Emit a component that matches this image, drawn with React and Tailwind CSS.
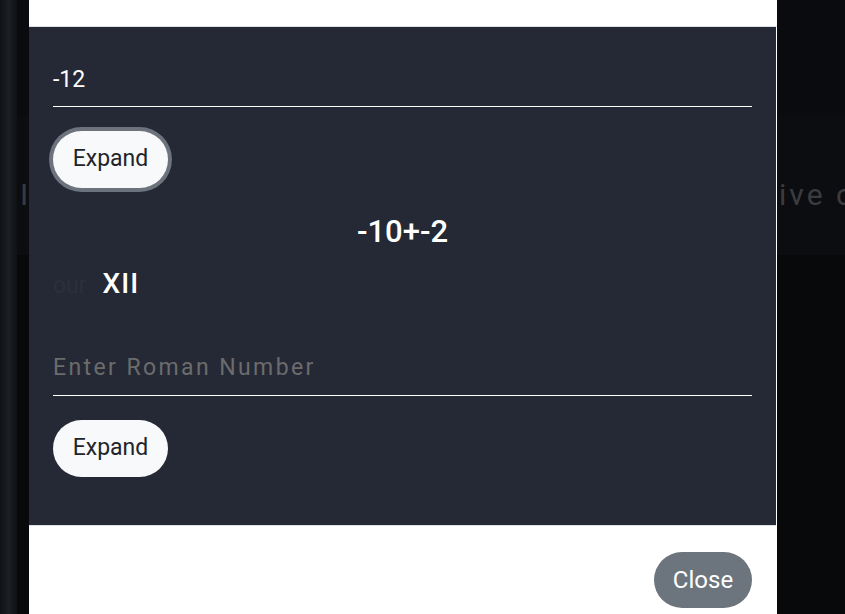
import React from "react";

export default function App() {
  return (
    <div className="relative w-[845px] h-[614px] overflow-hidden flex bg-[#08090b] font-['Roboto','Open_Sans',sans-serif]">
      {/* backdrop page */}
      <div className="w-[17px] h-full bg-gradient-to-r from-[#101216] via-[#1c1f24] to-[#0f1114]" />
      <div className="flex-1 flex flex-col">
        <div className="h-[115px] bg-[#0a0b0e]" />
        <div className="h-[140px] bg-[#0c0d10] flex items-center pt-[18px] pl-[3px] text-[30px] tracking-[3px] text-[#3b3c40] whitespace-nowrap">
          <span>I</span>
          <span className="ml-auto w-[67px] overflow-hidden pl-[1px]">ive c</span>
        </div>
        <div className="flex-1 bg-[#08090b]" />
      </div>

      {/* modal */}
      <div className="absolute left-[29px] top-0 w-[748px] h-[614px] bg-white flex flex-col">
        <div className="h-[27px] border-b border-[#dee2e6]" />
        <div className="w-[747px] bg-[#242935] px-6 pt-[30px] pb-[48px] border-b border-[#dee2e6] flex flex-col">
          <input
            readOnly
            value="-12"
            className="h-[50px] w-full bg-transparent border-b border-white text-white text-[23px] pb-[5px] outline-none"
          />
          <div className="mt-[24px]">
            <button className="w-[115px] h-[57px] rounded-full bg-[#f8f9fa] text-[#212529] text-[23px] ring-4 ring-[#6c737d]">
              Expand
            </button>
          </div>
          <div className="mt-[24px] text-center text-white text-[31px] font-medium leading-[40px]">-10+-2</div>
          <div className="mt-[14px] flex items-baseline leading-[36px]">
            <span className="text-[23px] text-[#2b303b]">our</span>
            <span className="ml-[16px] text-[28px] font-medium text-white tracking-[1px]">XII</span>
          </div>
          <input
            readOnly
            placeholder="Enter Roman Number"
            className="mt-[42px] h-[50px] w-full bg-transparent border-b border-white text-white text-[23px] tracking-[2.4px] pb-[7px] outline-none placeholder:text-[#6c6c6c]"
          />
          <div className="mt-[24px]">
            <button className="w-[115px] h-[57px] rounded-full bg-[#f8f9fa] text-[#212529] text-[23px]">
              Expand
            </button>
          </div>
        </div>
        <div className="flex justify-end pt-[26px] pr-[25px]">
          <button className="w-[98px] h-[56px] rounded-full bg-[#6c757d] text-white text-[24px]">Close</button>
        </div>
      </div>
    </div>
  );
}
